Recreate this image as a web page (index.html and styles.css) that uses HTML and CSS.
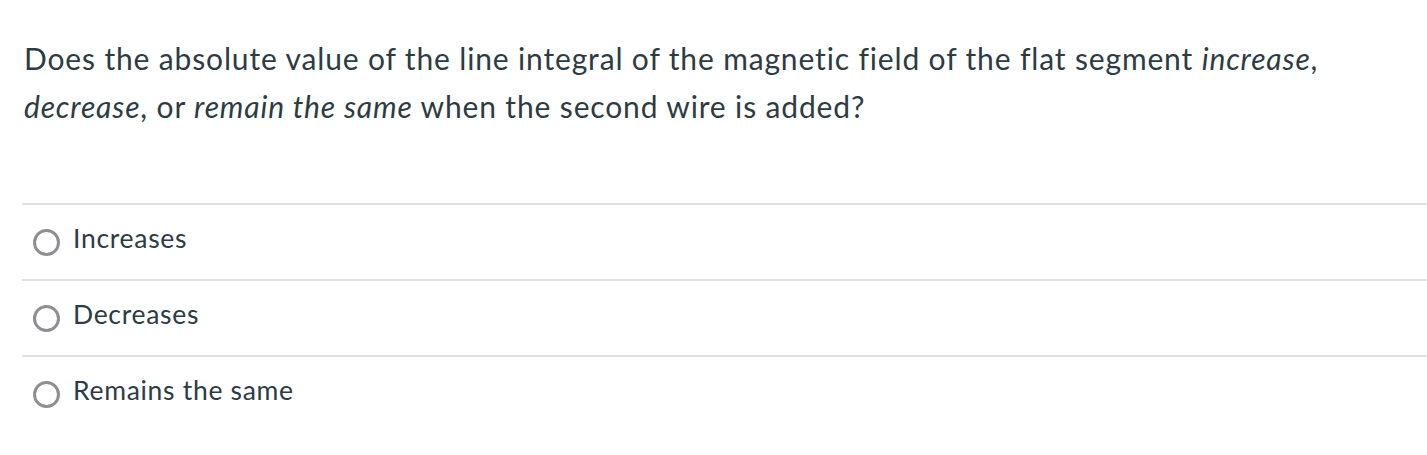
FILE: index.html
```html
<!DOCTYPE html>
<html>
<head>
<meta charset="utf-8">
<link rel="stylesheet" href="styles.css">
</head>
<body>
<div class="question">
  <p class="question-text">Does the absolute value of the line integral of the magnetic field of the flat segment <em>increase</em>, <em>decrease</em>, or <em>remain the same</em> when the second wire is added?</p>
  <div class="answers">
    <label class="answer"><span class="radio"></span><span class="answer-text">Increases</span></label>
    <label class="answer"><span class="radio"></span><span class="answer-text">Decreases</span></label>
    <label class="answer"><span class="radio"></span><span class="answer-text">Remains the same</span></label>
  </div>
</div>
</body>
</html>
```
FILE: styles.css
```css
html, body {
  margin: 0;
  padding: 0;
  background: #ffffff;
}
body {
  font-family: Lato, "Open Sans", sans-serif;
  color: #2d3b45;
}
.question {
  padding: 34px 0 0 22px;
}
.question-text {
  margin: 0 0 0 2px;
  font-size: 30px;
  letter-spacing: 0.85px;
  line-height: 48px;
  font-variant-ligatures: common-ligatures;
}
.question-text em {
  font-style: italic;
}
.answers {
  margin-top: 73px;
}
.answer {
  display: flex;
  align-items: center;
  gap: 13px;
  height: 74px;
  border-top: 2px solid #dfe1e3;
  padding-left: 11px;
  font-size: 26.5px;
  letter-spacing: 0.7px;
}
.radio {
  width: 21px;
  height: 21px;
  border: 3px solid #8d8f95;
  border-radius: 50%;
  flex: none;
}
.answer-text {
  line-height: 30px;
  margin-bottom: 8px;
}
```
